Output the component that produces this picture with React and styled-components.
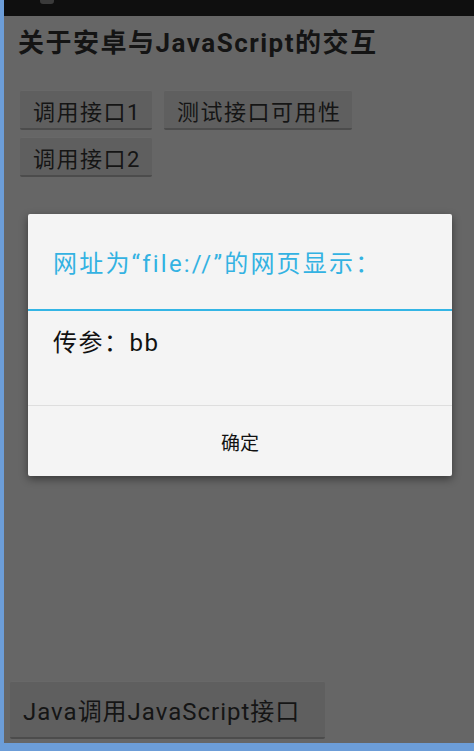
import styled, { createGlobalStyle } from "styled-components";

const GlobalStyle = createGlobalStyle`
    html, body {
        margin: 0;
        padding: 0;
        background: #6c9dd8;
    }
    body {
        font-family: "Roboto", "Noto Sans CJK SC", sans-serif;
    }
`

const Screen = styled.div`
    margin-left: 4px;
    width: 470px;
    height: 743px;
    display: flex;
    flex-direction: column;
    position: relative;
    overflow: hidden;
`
const StatusBar = styled.div`
    height: 16px;
    background: #0f0f0f;
    display: flex;
    align-items: flex-start;
    padding-left: 36px;
`
const StatusIcon = styled.div`
    width: 14px;
    height: 4px;
    border-radius: 0 0 3px 3px;
    background: #3a3a3a;
`
const Content = styled.div`
    flex: 1;
    background: #666666;
    display: flex;
    flex-direction: column;
    padding: 11px 0 4px;
`
const Title = styled.h1`
    margin: 0 0 0 14px;
    font-size: 26px;
    font-weight: 700;
    line-height: 32px;
    letter-spacing: 1.5px;
    color: #141414;
`
const ButtonRows = styled.div`
    margin-top: 31px;
    padding-left: 16px;
    display: flex;
    flex-direction: column;
    gap: 7px;
`
const Row = styled.div`
    display: flex;
    gap: 12px;
`
const GreyButton = styled.div`
    box-sizing: border-box;
    height: ${props => props.tall ? "58px" : "40px"};
    width: ${props => props.w}px;
    padding-left: 13px;
    display: flex;
    align-items: center;
    background: #5f5f5f;
    border-top: 1px solid #686868;
    border-bottom: 2px solid #4c4c4c;
    border-radius: 2px;
    font-size: ${props => props.tall ? "24px" : "22px"};
    letter-spacing: ${props => props.tall ? "1px" : "1.5px"};
    color: #151515;
    white-space: nowrap;
`
const Spacer = styled.div`
    flex: 1;
`
const BottomWrap = styled.div`
    padding-left: 6px;
`

const Dialog = styled.div`
    position: absolute;
    left: 24px;
    top: 214px;
    width: 424px;
    height: 262px;
    background: #f4f4f4;
    border-radius: 2px;
    box-shadow: 0 3px 8px rgba(0, 0, 0, 0.45);
    display: flex;
    flex-direction: column;
`
const DialogTitle = styled.div`
    height: 95px;
    padding-left: 25px;
    display: flex;
    align-items: center;
    font-size: 24px;
    letter-spacing: 2.2px;
    color: #33b2e2;
    border-bottom: 2px solid #33b5e5;
`
const DialogMessage = styled.div`
    height: 95px;
    padding: 12px 0 0 25px;
    box-sizing: border-box;
    font-size: 24px;
    letter-spacing: 1.5px;
    color: #111;
    border-bottom: 1px solid #dedede;
`
const DialogButton = styled.div`
    flex: 1;
    display: flex;
    align-items: center;
    justify-content: center;
    font-size: 19px;
    color: #111;
`

export default function App() {
    return (
        <>
            <GlobalStyle />
            <Screen>
                <StatusBar>
                    <StatusIcon />
                </StatusBar>
                <Content>
                    <Title>关于安卓与JavaScript的交互</Title>
                    <ButtonRows>
                        <Row>
                            <GreyButton w={132}>调用接口1</GreyButton>
                            <GreyButton w={188}>测试接口可用性</GreyButton>
                        </Row>
                        <Row>
                            <GreyButton w={132}>调用接口2</GreyButton>
                        </Row>
                    </ButtonRows>
                    <Spacer />
                    <BottomWrap>
                        <GreyButton tall w={315}>Java调用JavaScript接口</GreyButton>
                    </BottomWrap>
                </Content>
                <Dialog>
                    <DialogTitle>网址为“file://”的网页显示：</DialogTitle>
                    <DialogMessage>传参：bb</DialogMessage>
                    <DialogButton>确定</DialogButton>
                </Dialog>
            </Screen>
        </>
    );
}
